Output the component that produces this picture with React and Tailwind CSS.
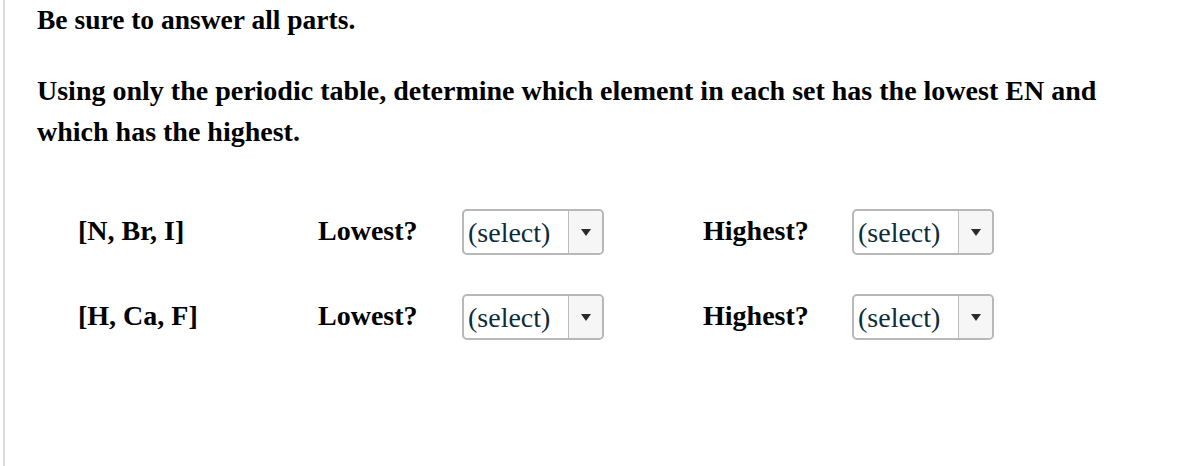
export default function App() {
  const Select = () => (
    <div className="flex h-[46px] w-[142px] items-stretch rounded-[5px] border-2 border-[#b8b8b8] bg-white">
      <div className="flex flex-1 items-center pl-[4px] pt-[2px] text-[28px] leading-none text-[#0d2b38]">(select)</div>
      <div className="flex w-[34px] items-center justify-center rounded-r-[4px] border-l border-[#bdbdbd] bg-[#f6f6f6]">
        <svg width="10" height="7" viewBox="0 0 10 7"><path d="M0 0h10L5 7z" fill="#2b2b2b" /></svg>
      </div>
    </div>
  );
  const rows = ["[N, Br, I]", "[H, Ca, F]"];
  return (
    <div className="h-[466px] w-[1202px] bg-white" style={{ fontFamily: '"Liberation Serif", "Times New Roman", serif' }}>
      <div className="ml-[3px] h-full border-l-2 border-[#dcdcdc] pl-[32px] pt-[2px] text-black">
        <p className="text-[27.5px] font-bold leading-[36px]">Be sure to answer all parts.</p>
        <p className="mt-[32px] text-[28px] font-bold leading-[41px]">
          Using only the periodic table, determine which element in each set has the lowest EN and<br />which has the highest.
        </p>
        <div className="mt-[57px] flex flex-col gap-[39px] pl-[41px]">
          {rows.map((r) => (
            <div key={r} className="flex items-center">
              <div className="w-[240px] pb-[3px] text-[28px] font-bold">{r}</div>
              <div className="w-[144px] pb-[3px] text-[28px] font-bold">Lowest?</div>
              <Select />
              <div className="ml-[99px] w-[149px] pb-[3px] text-[28px] font-bold">Highest?</div>
              <Select />
            </div>
          ))}
        </div>
      </div>
    </div>
  );
}
